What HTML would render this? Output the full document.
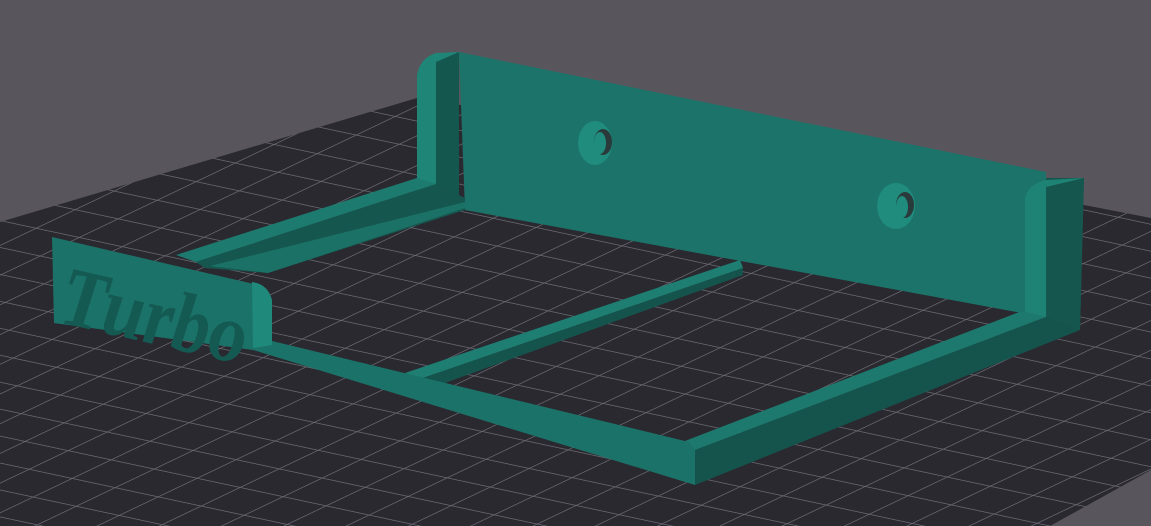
<!DOCTYPE html>
<html><head><meta charset="utf-8"><style>
html,body{margin:0;padding:0;background:#58565c;}
svg{display:block}
</style></head><body>
<svg width="1151" height="526" viewBox="0 0 1151 526" xmlns="http://www.w3.org/2000/svg">
<defs>
<pattern id="g" width="20" height="20" patternUnits="userSpaceOnUse" patternTransform="matrix(2.15,0.46,1.95,-0.93,3,6)">
<rect width="20" height="20" fill="#2b2930"/>
<path d="M0 0H20M0 0V20" stroke="#6a6870" stroke-width="1.1" fill="none"/>
</pattern>
</defs>
<rect width="1151" height="526" fill="#58565c"/>
<polygon points="0,222 417,98 1084,205 1151,218 1151,470 1050,526 0,526" fill="url(#g)"/>

<polygon points="459,52 1046,172 1046,317 1022,313 465,210" fill="#1c7369"/>
<path d="M417,205 L417,75 Q420,58 436,53 L459,52 L459,205 Z" fill="#1f8577"/>
<polygon points="436,62 459,52 459,205 436,200" fill="#14574f"/>
<polygon points="1046,178 1084,178 1080,330 695,485 695,450 1046,317" fill="#14544c"/>
<path d="M1025,317 L1025,198 Q1028,184 1046,180 L1084,178 L1046,190 L1046,317 Z" fill="#1e8274"/>
<polygon points="1046,187 1084,178 1080,330 1046,317" fill="#15564e"/>
<polygon points="1022,311 1046,317 695,450 672,446" fill="#1d796d"/>

<ellipse cx="595" cy="143" rx="17" ry="22" fill="#1f8c7e"/>
<ellipse cx="603" cy="142" rx="9" ry="13" fill="#2a3a3a"/>
<ellipse cx="600" cy="143" rx="6" ry="11" fill="#1f8c7e"/>
<ellipse cx="896" cy="206" rx="19" ry="23" fill="#1f8c7e"/>
<ellipse cx="905" cy="205" rx="9" ry="13" fill="#2a3a3a"/>
<ellipse cx="902" cy="207" rx="6" ry="11" fill="#1f8c7e"/>

<polygon points="176,255 417,178 436,184 196,262" fill="#1d7a6e"/>
<polygon points="196,262 436,184 465,198 465,210 268,273 205,268" fill="#15574f"/>
<polygon points="210,266 465,202 465,208 268,273" fill="#1c7166"/>

<polygon points="405,373 740,260 743,268 420,379" fill="#1e7e71"/>
<polygon points="420,379 743,268 743,275 445,383" fill="#14544c"/>

<polygon points="130,318 268,340 689,442 695,450 695,485 253,350 54,323" fill="#1b7268"/>

<polygon points="52,237 258,285 253,348 54,323" fill="#1b7268"/>
<path d="M252,282 Q268,284 272,300 L272,345 L253,348 Z" fill="#1f8a7c"/>
<text x="0" y="0" transform="translate(58,322) skewY(13) skewX(-8)" font-family="'Liberation Serif',serif" font-style="italic" font-weight="bold" font-size="86" textLength="185" lengthAdjust="spacingAndGlyphs" fill="#145a52">Turbo</text>
</svg>
</body></html>
